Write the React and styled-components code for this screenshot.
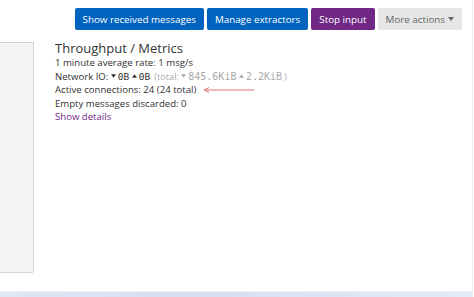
import React from "react";
import styled, { createGlobalStyle } from "styled-components";

const Global = createGlobalStyle`
  html, body { margin: 0; padding: 0; background: #fff; }
  body { font-family: "Open Sans", "Liberation Sans", sans-serif; color: #333; }
`;

const Page = styled.div`
  width: 472px;
  height: 297px;
  display: flex;
  flex-direction: column;
  overflow: hidden;
  border-right: 1px solid #ececec;
`;

const Toolbar = styled.div`
  display: flex;
  justify-content: flex-end;
  gap: 3px;
  padding: 8px 10px 0 0;
  height: 22px;
`;

const Button = styled.button`
  height: 22px;
  padding: 0 8px;
  border: none;
  border-radius: 2px;
  font-family: inherit;
  font-size: 9.8px;
  background: ${(p) => p.$bg};
  color: ${(p) => p.$fg || "#fff"};
  display: flex;
  align-items: center;
  gap: 4px;
  white-space: nowrap;
`;

const Body = styled.div`
  flex: 1;
  display: flex;
  padding-top: 12px;
`;

const SidePanel = styled.div`
  width: 33px;
  height: 229px;
  margin-left: -1px;
  background: #f4f4f4;
  border: 1px solid #d4d4d4;
  border-radius: 0 0 2px 0;
  flex-shrink: 0;
`;

const Content = styled.div`
  margin-left: 21px;
  margin-top: -1px;
`;

const Title = styled.h2`
  margin: 0 0 1px;
  font-size: 13px;
  font-weight: 400;
  line-height: 14px;
  color: #333;
`;

const Line = styled.div`
  font-size: 9.6px;
  line-height: 13.5px;
  white-space: nowrap;
  display: flex;
  align-items: center;
`;

const Mono = styled.span`
  font-family: "DejaVu Sans Mono", "Liberation Mono", monospace;
  font-size: ${(p) => (p.$muted ? 10 : 9.5)}px;
  color: ${(p) => (p.$muted ? "#aaa" : "#333")};
`;

const Muted = styled.span`
  color: #aaa;
  font-size: 9.2px;
  margin-left: 4px;
`;

const Arrow = styled.svg`
  margin-left: 7px;
`;

const Link = styled.a`
  color: #702785;
  text-decoration: none;
`;

const Footer = styled.div`
  height: 5px;
  background: linear-gradient(90deg, #dfe7f5, #d6def2 40%, #e4ebf7);
  border-top: 1px solid #eef2fa;
`;

const Caret = ({ up, color = "#333", gap = 2 }) => (
  <svg width="5" height="4" viewBox="0 0 6 4" style={{ marginRight: gap }}>
    <path d={up ? "M0 4 L3 0 L6 4 Z" : "M0 0 L6 0 L3 4 Z"} fill={color} />
  </svg>
);

export default function App() {
  return (
    <Page>
      <Global />
      <Toolbar>
        <Button $bg="#0063be">Show received messages</Button>
        <Button $bg="#0063be">Manage extractors</Button>
        <Button $bg="#702785">Stop input</Button>
        <Button $bg="#e6e6e6" $fg="#666">
          More actions
          <svg width="6" height="4" viewBox="0 0 6 4" style={{ marginLeft: -1 }}>
            <path d="M0 0 L6 0 L3 4 Z" fill="#666" />
          </svg>
        </Button>
      </Toolbar>
      <Body>
        <SidePanel />
        <Content>
          <Title>Throughput / Metrics</Title>
          <Line>1 minute average rate: 1 msg/s</Line>
          <Line>
            Network IO:&nbsp;<Caret />
            <Mono>0B</Mono>&nbsp;<Caret up />
            <Mono>0B</Mono>
            <Muted>(total:&nbsp;</Muted>
            <Caret color="#aaa" />
            <Mono $muted>845.6KiB</Mono>
            &nbsp;<Caret up color="#aaa" />
            <Mono $muted>2.2KiB</Mono>
            <Muted style={{ marginLeft: 2 }}>)</Muted>
          </Line>
          <Line>
            Active connections: 24 (24 total)
            <Arrow width="52" height="6" viewBox="0 0 52 6">
              <path d="M1 3 L51 3" stroke="#e0737b" strokeWidth="1" />
              <path d="M1 3 L6 0.5 M1 3 L6 5.5" stroke="#e0737b" strokeWidth="1" fill="none" />
            </Arrow>
          </Line>
          <Line>Empty messages discarded: 0</Line>
          <Line>
            <Link href="#">Show details</Link>
          </Line>
        </Content>
      </Body>
      <Footer />
    </Page>
  );
}
